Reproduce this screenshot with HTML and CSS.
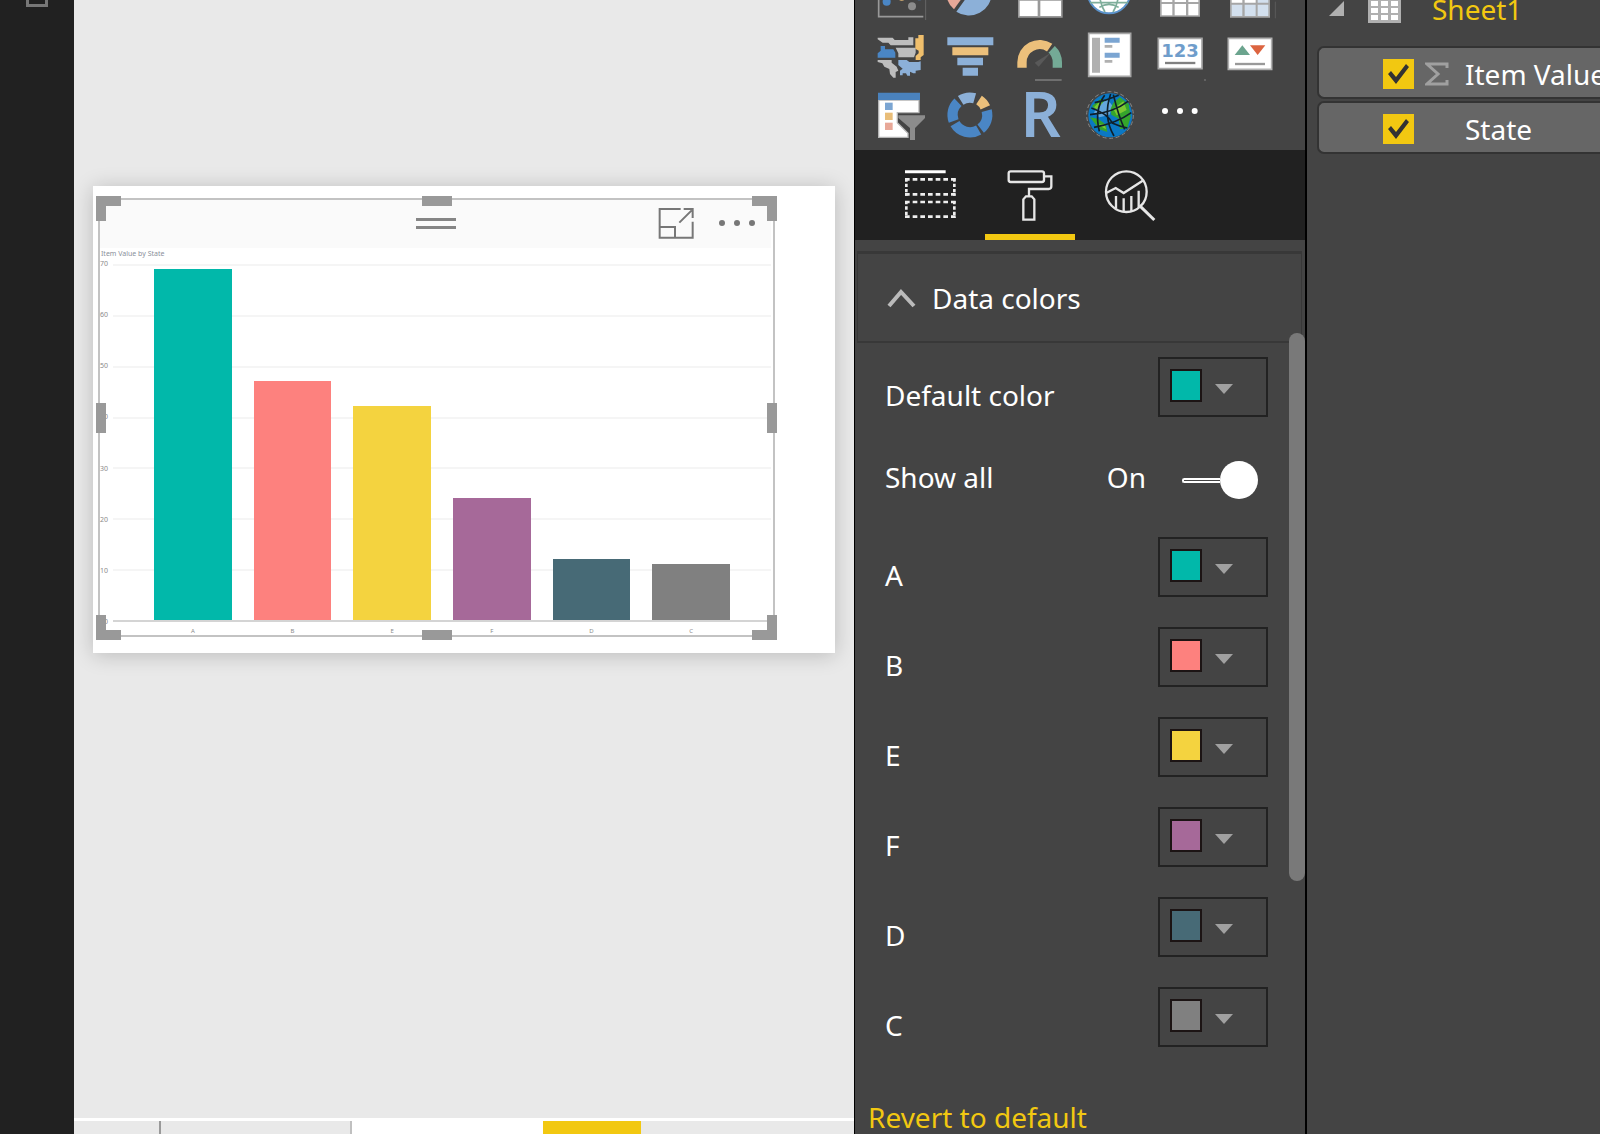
FILE: index.html
```html
<!DOCTYPE html>
<html lang="en">
<head>
<meta charset="utf-8">
<meta name="viewport" content="width=device-width, initial-scale=1">
<title>Item Value by State</title>
<link rel="stylesheet" href="styles.css">
</head>
<body>
<nav class="rail" aria-label="Views">
  <button class="rail-button" aria-label="Relationships">
    <svg width="22" height="22" viewBox="0 0 22 22"><rect x="1.5" y="1.5" width="19" height="19" fill="none" stroke="#777" stroke-width="3"/></svg>
  </button>
</nav>

<main class="canvas">
  <div class="workspace">
    <article class="report-page">
      <section class="visual" aria-label="Item Value by State">
        <header class="visual-header">
          <button class="grip" aria-label="Move"></button>
          <div class="visual-actions">
            <button class="plain" aria-label="Focus mode">
              <svg width="36" height="32" viewBox="624 95 108 96" fill="none" stroke="#777" stroke-width="6"><path d="M692 101H629V187H728V139M629 155H675V187M688 142L725 105M701 101H728V128"/></svg>
            </button>
            <button class="plain" aria-label="More options">
              <svg width="36" height="8" viewBox="0 0 36 8" fill="#777"><circle cx="3" cy="4" r="3"/><circle cx="18" cy="4" r="3"/><circle cx="33" cy="4" r="3"/></svg>
            </button>
          </div>
        </header>
        <h1 class="chart-title">Item Value by State</h1>
        <div class="chart">
          <div class="ticks"><span>70</span><span>60</span><span>50</span><span>40</span><span>30</span><span>20</span><span>10</span><span>0</span></div>
          <div class="plot">
            <div class="gridlines"><i></i><i></i><i></i><i></i><i></i><i></i><i></i></div>
            <div class="bars">
              <div class="bar teal" style="height:98.6%"></div>
              <div class="bar coral" style="height:67.1%"></div>
              <div class="bar yellow" style="height:60%"></div>
              <div class="bar purple" style="height:34.3%"></div>
              <div class="bar slate" style="height:17.1%"></div>
              <div class="bar gray" style="height:15.7%"></div>
            </div>
          </div>
          <div class="categories"><span>A</span><span>B</span><span>E</span><span>F</span><span>D</span><span>C</span></div>
        </div>
        <span class="handle corner nw"></span><span class="handle edge n"></span><span class="handle corner ne"></span>
        <span class="handle side w"></span><span class="handle side e"></span>
        <span class="handle corner sw"></span><span class="handle edge s"></span><span class="handle corner se"></span>
      </section>
    </article>
  </div>
  <footer class="page-tabs">
    <button class="page-tab nav" aria-label="Scroll pages"></button>
    <button class="page-tab" aria-label="Page 1"></button>
    <button class="page-tab current" aria-label="Page 2"></button>
    <button class="page-tab add" aria-label="New page"></button>
    <div class="page-tab-rest"></div>
  </footer>
</main>

<aside class="visualizations" aria-label="Visualizations">
  <div class="gallery">
    <button class="plain" aria-label="Scatter chart"><svg viewBox="48 -102 210 180"><path d="M86 -60V50H220" fill="none" stroke="#999" stroke-width="5"/><path d="M227 -50V60" stroke="#777" stroke-width="2"/><circle cx="110" cy="5" r="12" fill="#4a86c5"/><circle cx="155" cy="-10" r="12" fill="#e9bd78"/><circle cx="186" cy="19" r="12" fill="#8c8c8c"/><circle cx="208" cy="-11" r="12" fill="#4a86c5"/></svg></button>
    <button class="plain" aria-label="Pie chart"><svg viewBox="258 -102 210 180"><path d="M366 -30L319 35A68 68 0 0 0 425 -22V-60Z" fill="#8cb0d8"/><path d="M352 -28L312 28A68 68 0 0 1 289 -28Z" fill="#e8a898"/></svg></button>
    <button class="plain" aria-label="Treemap"><svg viewBox="468 -102 210 180"><path d="M504 -80H638V53H504Z" fill="#999"/><path d="M509 -75H633V-3H509ZM509 2H563V48H509ZM571 2H633V48H571Z" fill="#fff"/></svg></button>
    <button class="plain" aria-label="Map"><svg viewBox="18 -102 210 180"><circle cx="117" cy="-24" r="64" fill="#fff" stroke="#5b93cc" stroke-width="6"/><path d="M60 8H174M88 -30Q88 10 105 36M146 -30Q146 10 129 36M88 22Q117 4 146 22" fill="none" stroke="#7fae9b" stroke-width="5"/></svg></button>
    <button class="plain" aria-label="Table"><svg viewBox="228 -102 210 180"><path d="M270 -70H390V50H270Z" fill="#a6a6a6"/><path d="M275 -28H307V6H275ZM314 -28H348V6H314ZM355 -28H385V6H355ZM275 12H307V46H275ZM314 12H348V46H314ZM355 12H385V46H355Z" fill="#fff"/></svg></button>
    <button class="plain" aria-label="Matrix"><svg viewBox="438 -102 210 180"><path d="M480 -70H600V53H480Z" fill="#a6a6a6"/><path d="M485 -28H517V8H485ZM524 -28H557V8H524Z" fill="#fff"/><path d="M563 -28H595V8H563ZM485 14H517V48H485ZM524 14H557V48H524ZM563 14H595V48H563Z" fill="#d3e0ee"/><path d="M616 5V55" stroke="#666" stroke-width="2"/></svg></button>

    <button class="plain" aria-label="Filled map"><svg viewBox="48 78 210 180"><path d="M83 113H128L134 120H175V112H190V136H122L115 128H98L83 118Z" fill="#bdbdbd"/><path d="M92 138H105V148H130L136 158V173H83V160L92 152Z" fill="#4a86c5"/><path d="M137 143H197V158L192 172H145V160Z" fill="#bdbdbd"/><path d="M83 180H125V188L140 200L145 212L137 216V233H130L120 222L118 207L103 200L97 190L83 186Z" fill="#bdbdbd"/><path d="M145 180H170L178 186H205L212 184V210L197 212V220H190L180 215V227H172L168 220H158V226H150V212L158 206L145 195Z" fill="#8cb0d8"/><path d="M205 105H221V165L212 172V180H197V168L206 160V152L196 146V115H205Z" fill="#f0bf6c"/></svg></button>
    <button class="plain" aria-label="Funnel"><svg viewBox="258 78 210 180"><path d="M292 112H430V136H292ZM322 173H399V196H322ZM338 203H384V227H338Z" fill="#8cb0d8"/><path d="M307 142H415V166H307Z" fill="#ecc07b"/></svg></button>
    <button class="plain" aria-label="Gauge"><svg viewBox="468 78 210 180"><g fill="none" stroke-width="28"><path d="M516 203V187A53 53 0 0 1 599 143" stroke="#ecc07b"/><path d="M605 148A53 53 0 0 1 622 187V203" stroke="#74aa96"/></g><path d="M554 188L602 158L566 200Z" fill="#595959"/><path d="M555 240H635" stroke="#999" stroke-width="3"/></svg></button>
    <button class="plain" aria-label="Multi-row card"><svg viewBox="18 78 210 180"><path d="M56 100H182V229H56Z" fill="#fff" stroke="#a6a6a6" stroke-width="5"/><path d="M66 113H90V218H66ZM104 135H127V143H104ZM104 180H127V188H104Z" fill="#b0b0b0"/><path d="M104 113H149V128H104ZM104 158H149V173H104Z" fill="#7ba5d2"/></svg></button>
    <button class="plain" aria-label="Card"><svg viewBox="228 78 210 180"><path d="M265 115H396V206H265Z" fill="#fff" stroke="#a6a6a6" stroke-width="5"/><text class="card-digits" x="330" y="170" text-anchor="middle">123</text><path d="M285 189H376" stroke="#808080" stroke-width="7"/><circle cx="405" cy="240" r="2" fill="#999"/></svg></button>
    <button class="plain" aria-label="KPI"><svg viewBox="438 78 210 180"><path d="M475 115H605V208H475Z" fill="#fff" stroke="#b0b0b0" stroke-width="5"/><path d="M494 165L517 136L540 165Z" fill="#6ba48e"/><path d="M540 136H586L563 165Z" fill="#dc6440"/><path d="M495 192H585" stroke="#999" stroke-width="7"/></svg></button>

    <button class="plain" aria-label="Slicer"><svg viewBox="48 258 210 180"><path d="M86 300H207V338H142V368L174 400V412H86Z" fill="#fff" stroke="#b5b5b5" stroke-width="4"/><path d="M84 278H210V300H84Z" fill="#4a82bd"/><path d="M105 308H128V330H105Z" fill="#7ba5d2"/><path d="M105 338H128V360H105Z" fill="#e9bd78"/><path d="M105 368H128V390H105Z" fill="#e8a898"/><path d="M145 346H225V354L195 384V420H180V384L145 354Z" fill="#8c8c8c"/></svg></button>
    <button class="plain" aria-label="Donut chart"><svg viewBox="258 258 210 180"><g fill="none" stroke-width="31"><path d="M332 301A52 52 0 0 1 374 295" stroke="#8cb0d8"/><path d="M387 300A52 52 0 0 1 406 322" stroke="#ecc07b"/><path d="M410 332A52 52 0 0 1 392 386" stroke="#4a86c5"/><path d="M386 390A52 52 0 0 1 315 371" stroke="#4a86c5"/><path d="M311 363A52 52 0 0 1 324 307" stroke="#4a86c5"/></g></svg></button>
    <button class="plain" aria-label="R script visual"><svg viewBox="468 258 210 180"><text class="r-mark" x="572" y="412" text-anchor="middle">R</text></svg></button>
    <button class="plain" aria-label="ArcGIS map"><svg viewBox="18 258 210 180"><circle cx="120" cy="345" r="70" fill="none" stroke="#8a8a8a" stroke-width="3" stroke-dasharray="12 8"/><circle cx="121" cy="346" r="66" fill="#0b78c4"/><path d="M84 306L112 298L128 318L118 345L88 352L72 340Z" fill="#63a6dc"/><path d="M66 318L92 296L102 304L78 330ZM60 352L84 356L108 374L112 396L88 388ZM130 308L150 292L176 312L182 350L172 384L150 388L146 356L124 344L122 326Z" fill="#35a52c"/><path d="M72 322L90 304L98 308L80 328ZM130 326L160 304L170 330L140 346ZM84 374L104 372L108 388Z" fill="#7cc832"/><path d="M74 308Q110 302 146 286M60 344Q130 338 174 304M72 382Q140 370 184 338M104 286Q72 330 88 394M122 282Q98 350 132 408M130 284Q146 350 164 388M64 324Q112 340 128 370Q150 380 172 384" fill="none" stroke="#10202a" stroke-width="5"/></svg></button>
    <button class="plain" aria-label="More visuals"><svg viewBox="228 258 210 180" fill="#fff"><circle cx="285" cy="333" r="9"/><circle cx="330" cy="333" r="9"/><circle cx="374" cy="333" r="9"/></svg></button>
  </div>

  <div class="pane-tabs" role="tablist">
    <button class="pane-tab" role="tab" aria-label="Fields"><svg viewBox="105 15 270 267" fill="none" stroke="#eee"><path d="M165 77H287" stroke="#fff" stroke-width="9"/><g stroke-width="8"><path d="M165 100H317M165 145H317M165 168H317M165 212H317" stroke-dasharray="14 9"/><path d="M169 97V149M313 97V149M169 165V216M313 165V216" stroke-dasharray="10 6"/></g></svg></button>
    <button class="pane-tab selected" role="tab" aria-selected="true" aria-label="Format"><svg viewBox="405 15 270 267" fill="none" stroke="#e6e6e6" stroke-width="7"><rect x="476" y="76" width="106" height="32" rx="6"/><path d="M582 91H604V121Q604 129 596 129H537V150"/><path d="M520 221V160L528 151H545L553 160V221Z"/></svg></button>
    <button class="pane-tab" role="tab" aria-label="Analytics"><svg viewBox="705 15 270 267" fill="none" stroke="#e6e6e6" stroke-width="7"><circle cx="829" cy="137" r="61"/><path d="M770 140L797 126L821 141L878 104M798 188V150M821 198V157M844 196V150M866 184V134"/><path d="M868 178L913 222" stroke-width="9"/></svg></button>
  </div>

  <div class="format">
    <button class="section-header" aria-expanded="true">
      <svg width="29" height="20" viewBox="0 0 29 20" fill="none" stroke="#bbb" stroke-width="4"><path d="M2 18L14 4L27 18"/></svg>
      <span>Data colors</span>
    </button>
    <div class="settings">
      <div class="setting"><span class="setting-label" id="l0">Default color</span><button class="picker" aria-labelledby="l0"><i class="swatch teal"></i><i class="arrow"></i></button></div>
      <div class="setting switch-row"><label for="showall">Show all</label><span class="state">On</span><input class="switch" type="checkbox" id="showall" checked></div>
      <div class="setting"><span class="setting-label" id="l1">A</span><button class="picker" aria-labelledby="l1"><i class="swatch teal"></i><i class="arrow"></i></button></div>
      <div class="setting"><span class="setting-label" id="l2">B</span><button class="picker" aria-labelledby="l2"><i class="swatch coral"></i><i class="arrow"></i></button></div>
      <div class="setting"><span class="setting-label" id="l3">E</span><button class="picker" aria-labelledby="l3"><i class="swatch yellow"></i><i class="arrow"></i></button></div>
      <div class="setting"><span class="setting-label" id="l4">F</span><button class="picker" aria-labelledby="l4"><i class="swatch purple"></i><i class="arrow"></i></button></div>
      <div class="setting"><span class="setting-label" id="l5">D</span><button class="picker" aria-labelledby="l5"><i class="swatch slate"></i><i class="arrow"></i></button></div>
      <div class="setting"><span class="setting-label" id="l6">C</span><button class="picker" aria-labelledby="l6"><i class="swatch gray"></i><i class="arrow"></i></button></div>
    </div>
    <a class="revert" href="#">Revert to default</a>
    <div class="scroll-thumb"></div>
  </div>
</aside>

<aside class="fields" aria-label="Fields">
  <div class="table-name">
    <svg width="16" height="16" viewBox="0 0 16 16"><path d="M15 0V15H0Z" fill="#b0b0b0"/></svg>
    <svg width="33" height="33" viewBox="0 0 33 33"><path d="M0 0H33V30H0Z" fill="#b0b0b0"/><path d="M3 0H10V4H3ZM13 0H20V4H13ZM23 0H30V4H23ZM3 8H10V13H3ZM13 8H20V13H13ZM23 8H30V13H23ZM3 15H10V20H3ZM13 15H20V20H13ZM23 15H30V20H23ZM3 22H10V27H3ZM13 22H20V27H13ZM23 22H30V27H23Z" fill="#fff"/></svg>
    <span>Sheet1</span>
  </div>
  <ul class="field-list">
    <li><label class="field"><input type="checkbox" class="check" checked><svg class="kind" width="24" height="24" viewBox="0 0 24 24"><path d="M22 6V2H2L13 12L2 22H22V18" fill="none" stroke="#a0a0a0" stroke-width="3"/></svg><span>Item Value</span></label></li>
    <li><label class="field"><input type="checkbox" class="check" checked><span class="kind"></span><span>State</span></label></li>
  </ul>
</aside>
</body>
</html>
```
FILE: styles.css
```css
*, ::before, ::after { box-sizing: border-box; }

body {
  margin: 0;
  height: 100vh;
  display: flex;
  overflow: hidden;
  background: #444;
  color: #fff;
  font: 28px/40px "Noto Sans", "Open Sans", sans-serif;
}

button {
  margin: 0;
  padding: 0;
  border: 0;
  background: none;
  color: inherit;
  font: inherit;
  text-align: left;
}

svg { display: block; }

.teal { background: #01b8aa; }
.coral { background: #fd817e; }
.yellow { background: #f4d33f; }
.purple { background: #a66999; }
.slate { background: #476a76; }
.gray { background: #808080; }

/* View rail */
.rail {
  flex: 0 0 74px;
  background: #212121;
  padding-left: 26px;
}
.rail-button { display: block; margin-top: -15px; }

/* Report canvas */
.canvas {
  flex: 1;
  min-width: 0;
  display: flex;
  flex-direction: column;
  background: #e9e9e9;
}
.workspace { flex: 1; padding: 186px 19px 0 19px; }
.report-page {
  padding: 12px 60px 16px 5px;
  background: #fff;
  box-shadow: 0 2px 20px rgba(0, 0, 0, .2);
}
.visual {
  position: relative;
  border: 2px solid #c3c3c3;
  padding-right: 2px;
}
.visual-header {
  height: 48px;
  display: grid;
  grid-template-columns: 1fr 40px 1fr;
  align-items: center;
  background: #fafafa;
}
.grip {
  grid-column: 2;
  height: 11px;
  margin-bottom: 2px;
  border: solid #858585;
  border-width: 3px 0;
}
.visual-actions {
  display: flex;
  align-items: center;
  justify-content: flex-end;
  gap: 25px;
  padding: 0 16px 2px 0;
}
.chart-title {
  margin: 0 0 4px 1px;
  font-size: 7px;
  line-height: 12px;
  font-weight: 400;
  color: #8a8f9a;
}
.chart {
  display: grid;
  grid-template: 358px 13px / 13px 1fr;
  font-size: 7px;
  line-height: 8px;
  color: #8a8a8a;
}
.ticks {
  display: flex;
  flex-direction: column;
  justify-content: space-between;
  margin: -4px 5px -4px 0;
  text-align: right;
}
.plot { display: grid; border-bottom: 2px solid #d4d4d4; }
.gridlines, .bars { grid-area: 1 / 1; }
.gridlines { display: grid; grid-auto-rows: 1fr; }
.gridlines i { border-top: 2px solid #f5f5f5; }
.bars, .categories { display: flex; gap: 22px; padding: 0 41px; }
.bars { align-items: flex-end; }
.bar { flex: 1; }
.categories { grid-column: 2; align-items: flex-end; font-size: 6px; }
.categories span { flex: 1; text-align: center; }

.handle { position: absolute; background: #999; }
.corner { width: 25px; height: 25px; }
.edge { width: 30px; height: 10px; left: calc(50% - 15px); }
.side { width: 10px; height: 30px; top: calc(50% - 15px); }
.nw, .n, .ne { top: -4px; }
.sw, .s, .se { bottom: -5px; }
.nw, .w, .sw { left: -4px; }
.ne, .e, .se { right: -4px; }
.nw { clip-path: polygon(0 0, 100% 0, 100% 10px, 10px 10px, 10px 100%, 0 100%); }
.ne { clip-path: polygon(0 0, 100% 0, 100% 100%, 15px 100%, 15px 10px, 0 10px); }
.sw { clip-path: polygon(0 0, 10px 0, 10px 15px, 100% 15px, 100% 100%, 0 100%); }
.se { clip-path: polygon(15px 0, 100% 0, 100% 100%, 0 100%, 0 15px, 15px 15px); }

.page-tabs { display: flex; height: 16px; border-top: 3px solid #fff; }
.page-tab { flex: 0 0 191px; border-right: 2px solid #c0c0c0; }
.page-tab.nav { flex-basis: 87px; border-color: #999; }
.page-tab.current { background: #fff; border: 0; }
.page-tab.add { flex-basis: 98px; background: #f2c811; border: 0; }
.page-tab-rest { flex: 1; }

/* Visualizations pane */
.visualizations {
  flex: 0 0 453px;
  display: flex;
  flex-direction: column;
  border: solid #000;
  border-width: 0 2px 0 1px;
  overflow: hidden;
}
.gallery {
  flex: 0 0 150px;
  min-height: 0;
  height: 150px;
  display: grid;
  grid-template: repeat(3, 60px) / repeat(6, 70px);
  align-content: end;
  padding: 0 0 4px 11px;
}
.gallery svg { width: 70px; height: 60px; }
.card-digits { font: 700 54px "DejaVu Sans", sans-serif; fill: #6f9dcb; }
.r-mark { font: 600 188px "Noto Sans", sans-serif; fill: #8cb0d8; }

.pane-tabs {
  flex: 0 0 90px;
  display: flex;
  gap: 10px;
  padding-left: 30px;
  background: #212121;
}
.pane-tab { width: 90px; height: 90px; }
.pane-tab svg { width: 90px; height: 89px; }
.selected { box-shadow: inset 0 -6px #f2c811; }

.format { position: relative; flex: 1; min-height: 0; padding: 11px 3px 0 2px; }
.section-header {
  width: 100%;
  height: 92px;
  display: flex;
  align-items: center;
  gap: 16px;
  padding-left: 29px;
  border: solid #383838;
  border-width: 3px 1px 2px;
}
.settings {
  display: flex;
  flex-direction: column;
  gap: 30px;
  padding: 14px 34px 0 28px;
}
.setting {
  height: 60px;
  display: flex;
  align-items: center;
  justify-content: space-between;
}
.setting-label { padding-top: 16px; }
.switch-row { padding-right: 10px; }
.state { margin-left: auto; }
.switch {
  appearance: none;
  width: 76px;
  height: 38px;
  margin: 6px 0 0 36px;
  display: flex;
  align-items: center;
}
.switch::before {
  content: "";
  flex: 1;
  height: 5px;
  border: 2px solid #fff;
  border-right: 0;
  border-radius: 3px 0 0 3px;
}
.switch::after {
  content: "";
  width: 38px;
  height: 38px;
  border-radius: 50%;
  background: #fff;
}
.picker {
  width: 110px;
  height: 60px;
  display: flex;
  align-items: center;
  gap: 13px;
  padding: 0 0 4px 10px;
  border: 2px solid #222;
}
.swatch { width: 32px; height: 33px; border: 2px solid #1c1414; }
.arrow {
  width: 18px;
  height: 10px;
  margin-top: 8px;
  background: #a0a0a0;
  clip-path: polygon(0 0, 100% 0, 50% 100%);
}
.revert {
  display: block;
  margin: 50px 0 0 11px;
  color: #f2c811;
  text-decoration: none;
}
.scroll-thumb {
  position: absolute;
  top: 93px;
  right: 0;
  width: 16px;
  height: 548px;
  border-radius: 8px;
  background: #797979;
}

/* Fields pane */
.fields { flex: 0 0 293px; overflow: hidden; }
.table-name {
  display: flex;
  align-items: center;
  margin: -11px 0 17px;
  padding-left: 22px;
  color: #f2c811;
}
.table-name svg + svg { margin-left: 23px; }
.table-name span { margin-left: 31px; }
.field-list {
  list-style: none;
  margin: 0;
  padding: 0 0 0 10px;
  display: grid;
  gap: 2px;
}
.field {
  height: 53px;
  display: flex;
  align-items: center;
  padding: 3px 0 0 64px;
  border: 2px solid #333;
  border-right: 0;
  border-radius: 7px 0 0 7px;
  background: #666;
  white-space: nowrap;
}
.check {
  appearance: none;
  flex: 0 0 31px;
  height: 30px;
  margin: 0;
  background: #f2c811;
}
.check::after {
  content: "";
  display: block;
  height: 30px;
  background: #333;
  clip-path: polygon(5px 15px, 8px 12px, 13px 18px, 23px 5px, 26px 8px, 13px 25px);
}
.kind { flex: 0 0 24px; margin: 0 16px 0 11px; }
```
